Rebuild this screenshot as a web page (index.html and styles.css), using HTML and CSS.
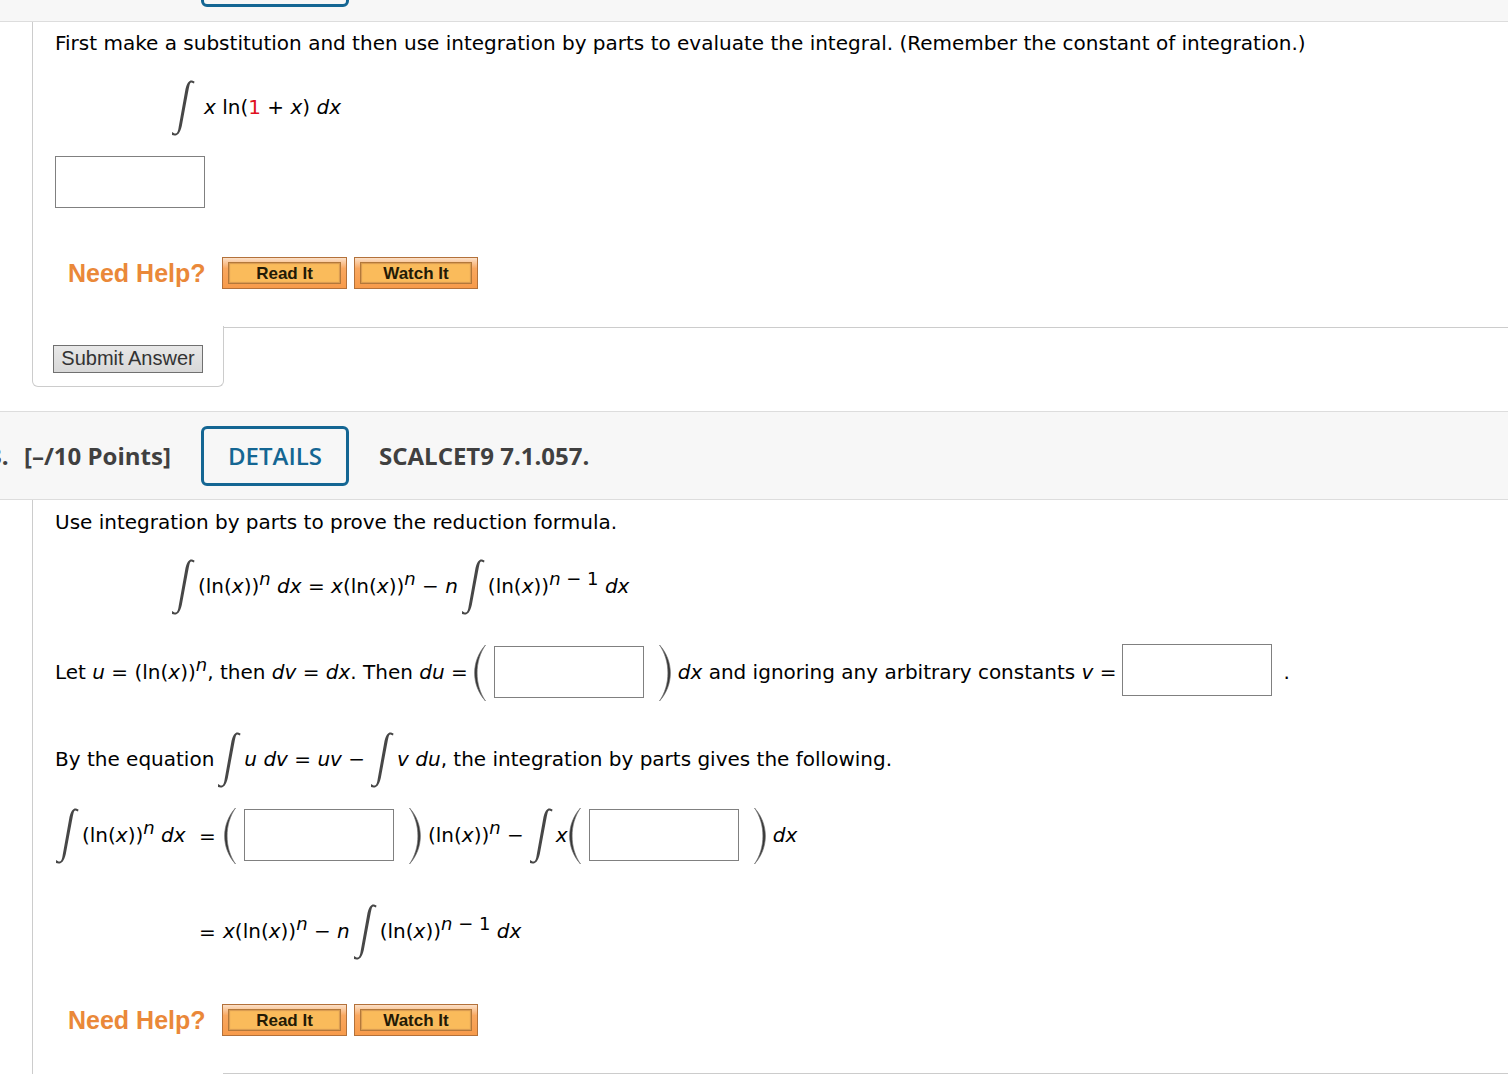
FILE: index.html
```
<!DOCTYPE html>
<html lang="en">
<head>
    <meta charset="UTF-8">
    <meta name="viewport" content="width=device-width, initial-scale=1.0">
    <title>Integration by Parts</title>
    <link rel="stylesheet" href="styles.css">
</head>
<body>
    <!-- Shared math symbols -->
    <svg class="symbols" aria-hidden="true">
        <symbol id="integral" viewBox="0 0 24 56">
            <path d="M1 52L3.500 53.500C6 54 7 52 7.700 47L14.500 9C16 2.500 18.500 0 21 0.500L23.500 1.500L23 3.500L20.500 2.500C19 2 18.500 5 17.500 10L10.800 46C9 53 7 55.500 3.500 55.500L1 55Z" fill="#333" fill-opacity="0.900"/>
        </symbol>
        <symbol id="paren" viewBox="0 0 14 58">
            <path d="M12.500 1C-2 17 -2 41 12.500 57C1.300 41 1.300 17 12.500 1Z" fill="#333" stroke="#777" stroke-width="0.700"/>
        </symbol>
    </svg>

    <header class="question-header first">
        <button type="button" class="details" aria-label="Details"></button>
    </header>

    <section class="question">
        <div class="content">
            <p>First make a substitution and then use integration by parts to evaluate the integral. (Remember the constant of integration.)</p>
            <div class="math indent">
                <svg class="integral"><use href="#integral"/></svg>
                <span class="spaced"><i>x</i> ln(<span class="red">1</span> + <i>x</i>) <i>dx</i></span>
            </div>
            <input type="text" class="answer" aria-label="Integral answer">
            <div class="help">
                <span class="help-label">Need Help?</span>
                <button type="button">Read It</button>
                <button type="button">Watch It</button>
            </div>
        </div>
        <div class="footer">
            <div class="tab">
                <button type="submit" class="submit">Submit Answer</button>
            </div>
            <div class="rule"></div>
        </div>
    </section>

    <header class="question-header">
        <span class="number">3.</span>
        <span class="points">[–/10 Points]</span>
        <button type="button" class="details">DETAILS</button>
        <span>SCALCET9 7.1.057.</span>
    </header>

    <section class="question second">
        <div class="content">
            <p>Use integration by parts to prove the reduction formula.</p>
            <div class="math indent">
                <svg class="integral"><use href="#integral"/></svg>
                <span>(ln(<i>x</i>))<sup><i>n</i></sup> <i>dx</i> = <i>x</i>(ln(<i>x</i>))<sup><i>n</i></sup> − <i>n</i></span>
                <svg class="integral inner"><use href="#integral"/></svg>
                <span>(ln(<i>x</i>))<sup><i>n</i> − 1</sup> <i>dx</i></span>
            </div>
            <div class="math parts">
                <span class="before">Let <i>u</i> = (ln(<i>x</i>))<sup><i>n</i></sup>, then <i>dv</i> = <i>dx</i>. Then <i>du</i> =</span>
                <svg class="paren"><use href="#paren"/></svg>
                <input type="text" class="answer" aria-label="du">
                <svg class="paren close"><use href="#paren"/></svg>
                <span class="before"><i>dx</i> and ignoring any arbitrary constants <i>v</i> =</span>
                <input type="text" class="answer raised" aria-label="v">
                <span class="period">.</span>
            </div>
            <div class="math equation">
                <span>By the equation</span>
                <svg class="integral inner"><use href="#integral"/></svg>
                <span class="before"><i>u dv</i> = <i>uv</i> −</span>
                <svg class="integral"><use href="#integral"/></svg>
                <span><i>v du</i>, the integration by parts gives the following.</span>
            </div>
            <div class="derivation">
                <div class="math">
                    <svg class="integral"><use href="#integral"/></svg>
                    <span>(ln(<i>x</i>))<sup><i>n</i></sup> <i>dx</i></span>
                </div>
                <span class="equals">=</span>
                <div class="math">
                    <svg class="paren"><use href="#paren"/></svg>
                    <input type="text" class="answer" aria-label="First factor">
                    <svg class="paren close"><use href="#paren"/></svg>
                    <span class="before">(ln(<i>x</i>))<sup><i>n</i></sup> −</span>
                    <svg class="integral"><use href="#integral"/></svg>
                    <span><i>x</i></span>
                    <svg class="paren"><use href="#paren"/></svg>
                    <input type="text" class="answer" aria-label="Second factor">
                    <svg class="paren close"><use href="#paren"/></svg>
                    <span><i>dx</i></span>
                </div>
                <span></span>
                <span class="equals">=</span>
                <div class="math">
                    <span><i>x</i>(ln(<i>x</i>))<sup><i>n</i></sup> − <i>n</i></span>
                    <svg class="integral inner"><use href="#integral"/></svg>
                    <span>(ln(<i>x</i>))<sup><i>n</i> − 1</sup> <i>dx</i></span>
                </div>
            </div>
            <div class="help">
                <span class="help-label">Need Help?</span>
                <button type="button">Read It</button>
                <button type="button">Watch It</button>
            </div>
        </div>
        <div class="footer last">
            <div class="tab"></div>
            <div class="rule"></div>
        </div>
    </section>
</body>
</html>
```
FILE: styles.css
```
* {
    box-sizing: border-box;
}
body {
    margin: 0;
    overflow: hidden;
    background: #fff;
    color: #000;
    font-family: Verdana, 'DejaVu Sans', sans-serif;
    font-size: 20px;
    line-height: 24px;
}
p {
    margin: 0;
    white-space: nowrap;
}
.symbols {
    display: none;
}
.question-header {
    display: flex;
    align-items: center;
    height: 89px;
    background: #f7f7f7;
    border-top: 1px solid #ddd;
    border-bottom: 1px solid #ddd;
    font-family: 'Open Sans', sans-serif;
    font-size: 24px;
    font-weight: 700;
    color: #404040;
    white-space: nowrap;
}
.question-header.first {
    margin-top: -67px;
    padding: 0 0 2px 201px;
}
.question-header:not(.first) {
    margin-top: 24px;
}
.number {
    width: 36px;
    margin-left: -12px;
}
.points {
    width: 177px;
}
.details {
    width: 148px;
    height: 60px;
    margin-right: 30px;
    border: 3px solid #146693;
    border-radius: 6px;
    background: #f7f7f7;
    font-family: inherit;
    font-size: 24px;
    font-weight: 600;
    color: #146693;
}
.content {
    margin-left: 32px;
    padding: 9px 0 37px 22px;
    border-left: 1px solid #ccc;
}
.second .content {
    padding: 10px 0 37px 22px;
}
.math {
    display: flex;
    align-items: center;
    height: 58px;
    white-space: nowrap;
}
.math > span {
    padding-bottom: 3px;
}
.indent {
    margin-top: 24px;
    padding-left: 116px;
}
.integral {
    flex: none;
    width: 24px;
    height: 56px;
    margin-right: 3px;
}
.inner {
    margin-left: 3px;
}
.paren {
    flex: none;
    width: 14px;
    height: 58px;
    margin-right: 7px;
}
.paren.close {
    transform: scaleX(-1);
    margin: 0 6px 0 14px;
}
sup {
    font-size: 18px;
    line-height: 0;
    vertical-align: 8px;
}
.spaced {
    margin-left: 6px;
}
.before {
    margin-right: 5px;
}
.red {
    color: #e01020;
}
.answer {
    display: block;
    flex: none;
    width: 150px;
    height: 52px;
    padding: 4px;
    border: 1px solid #808080;
    background: #fff;
    font: inherit;
}
.math .answer {
    margin-bottom: 2px;
}
.math .raised {
    margin-bottom: 6px;
}
.indent + .answer {
    margin-top: 19px;
}
.period {
    margin-left: 12px;
}
.parts {
    margin-top: 28px;
}
.equation {
    margin-top: 29px;
}
.derivation {
    display: grid;
    grid-template-columns: 144px 24px 1fr;
    row-gap: 38px;
    align-items: center;
    margin-top: 18px;
}
.help {
    display: flex;
    align-items: center;
    margin-top: 49px;
    padding-left: 13px;
}
.derivation + .help {
    margin-top: 43px;
}
.help-label {
    width: 154px;
    font-family: Arial, 'Liberation Sans', sans-serif;
    font-size: 25px;
    font-weight: 700;
    color: #ea8839;
}
.help button {
    position: relative;
    z-index: 0;
    width: 125px;
    height: 32px;
    margin-right: 7px;
    padding: 2px 0 0;
    border: 1px solid #b3713a;
    background: linear-gradient(#fbe0c8, #f9a860 35%, #f79b4b);
    font-family: Arial, 'Liberation Sans', sans-serif;
    font-size: 17px;
    font-weight: 700;
    color: #231a06;
}
.help button:last-child {
    width: 124px;
}
.help button::before {
    content: '';
    position: absolute;
    inset: 4px 5px;
    z-index: -1;
    border: 1px solid #b3783a;
    background: #fabb5b;
    box-shadow: inset 0 0 1px 1px #d69a50;
}
.footer {
    display: flex;
    margin-left: 32px;
}
.tab {
    width: 192px;
    height: 61px;
    padding: 19px 0 0 20px;
    border: 1px solid #ccc;
    border-top: none;
    border-radius: 0 0 6px 6px;
}
.rule {
    flex: 1;
    margin-top: 1px;
    border-top: 1px solid #ccc;
}
.submit {
    display: block;
    width: 150px;
    height: 28px;
    padding: 0 0 2px;
    border: 1px solid #707070;
    background: linear-gradient(#e8e8e8, #d8d8d8);
    font-family: Arial, 'Liberation Sans', sans-serif;
    font-size: 20px;
    line-height: 24px;
    color: #333;
}
.last .tab {
    width: 191px;
    height: 2px;
    padding: 0;
    border-width: 0 0 0 1px;
    border-radius: 0;
}
.last .rule {
    margin-top: 0;
}
```
